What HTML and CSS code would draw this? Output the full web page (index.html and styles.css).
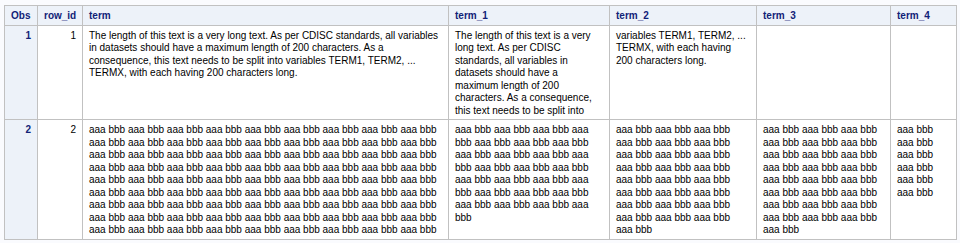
FILE: index.html
```html
<!DOCTYPE html>
<html>
<head>
<meta charset="utf-8">
<link rel="stylesheet" href="styles.css">
</head>
<body>
<table class="table">
<colgroup>
<col class="c-obs"><col class="c-id"><col class="c-term"><col class="c-t1"><col class="c-t2"><col class="c-t3"><col class="c-t4">
</colgroup>
<thead>
<tr>
<th class="hdr">Obs</th><th class="hdr">row_id</th><th class="hdr">term</th><th class="hdr">term_1</th><th class="hdr">term_2</th><th class="hdr">term_3</th><th class="hdr">term_4</th>
</tr>
</thead>
<tbody>
<tr class="r1">
<th class="rowhdr">1</th>
<td class="num">1</td>
<td class="data">The length of this text is a very long text. As per CDISC standards, all variables in datasets should have a maximum length of 200 characters. As a consequence, this text needs to be split into variables TERM1, TERM2, ... TERMX, with each having 200 characters long.</td>
<td class="data">The length of this text is a very long text. As per CDISC standards, all variables in datasets should have a maximum length of 200 characters. As a consequence, this text needs to be split into</td>
<td class="data">variables TERM1, TERM2, ... TERMX, with each having 200 characters long.</td>
<td class="data"></td>
<td class="data"></td>
</tr>
<tr class="r2">
<th class="rowhdr">2</th>
<td class="num">2</td>
<td class="data">aaa bbb aaa bbb aaa bbb aaa bbb aaa bbb aaa bbb aaa bbb aaa bbb aaa bbb
aaa bbb aaa bbb aaa bbb aaa bbb aaa bbb aaa bbb aaa bbb aaa bbb aaa bbb
aaa bbb aaa bbb aaa bbb aaa bbb aaa bbb aaa bbb aaa bbb aaa bbb aaa bbb
aaa bbb aaa bbb aaa bbb aaa bbb aaa bbb aaa bbb aaa bbb aaa bbb aaa bbb
aaa bbb aaa bbb aaa bbb aaa bbb aaa bbb aaa bbb aaa bbb aaa bbb aaa bbb
aaa bbb aaa bbb aaa bbb aaa bbb aaa bbb aaa bbb aaa bbb aaa bbb aaa bbb
aaa bbb aaa bbb aaa bbb aaa bbb aaa bbb aaa bbb aaa bbb aaa bbb aaa bbb
aaa bbb aaa bbb aaa bbb aaa bbb aaa bbb aaa bbb aaa bbb aaa bbb aaa bbb
aaa bbb aaa bbb aaa bbb aaa bbb aaa bbb aaa bbb aaa bbb aaa bbb aaa bbb</td>
<td class="data">aaa bbb aaa bbb aaa bbb aaa bbb aaa bbb
aaa bbb aaa bbb aaa bbb aaa bbb aaa bbb
aaa bbb aaa bbb aaa bbb aaa bbb aaa bbb
aaa bbb aaa bbb aaa bbb aaa bbb aaa bbb
aaa bbb aaa bbb aaa bbb aaa bbb aaa bbb</td>
<td class="data">aaa bbb aaa bbb aaa bbb aaa bbb aaa bbb
aaa bbb aaa bbb aaa bbb aaa bbb aaa bbb
aaa bbb aaa bbb aaa bbb aaa bbb aaa bbb
aaa bbb aaa bbb aaa bbb aaa bbb aaa bbb
aaa bbb aaa bbb aaa bbb aaa bbb aaa bbb</td>
<td class="data">aaa bbb aaa bbb aaa bbb aaa bbb aaa bbb
aaa bbb aaa bbb aaa bbb aaa bbb aaa bbb
aaa bbb aaa bbb aaa bbb aaa bbb aaa bbb
aaa bbb aaa bbb aaa bbb aaa bbb aaa bbb
aaa bbb aaa bbb aaa bbb aaa bbb aaa bbb</td>
<td class="data">aaa bbb aaa bbb aaa bbb aaa bbb aaa bbb aaa bbb</td>
</tr>
</tbody>
</table>
</body>
</html>
```

FILE: styles.css
```css
html, body {
  margin: 0;
  background: #fafbfe;
}
body {
  padding: 5px 4px;
  font-family: "Liberation Sans", Arial, sans-serif;
  font-size: 10px;
  color: #000;
}
.table {
  border-collapse: collapse;
  table-layout: fixed;
  width: 952px;
  border: 1px solid #c1c1c1;
}
.c-obs { width: 33px; }
.c-id { width: 45px; }
.c-term { width: 366px; }
.c-t1 { width: 161px; }
.c-t2 { width: 147px; }
.c-t3 { width: 134px; }
.c-t4 { width: 66px; }
.table th, .table td {
  border: 1px solid #c1c1c1;
  padding: 4px 6px 2px 6px;
  vertical-align: top;
  line-height: 12.5px;
}
.hdr {
  background: #edf2f9;
  color: #112277;
  font-weight: bold;
  text-align: left;
  padding-top: 3px;
  padding-bottom: 3px;
}
.rowhdr {
  background: #edf2f9;
  color: #112277;
  font-weight: bold;
  text-align: right;
}
.num {
  background: #fff;
  text-align: right;
}
.data {
  background: #fff;
  text-align: left;
}
.r2 .data {
  padding-right: 10px;
}
```
